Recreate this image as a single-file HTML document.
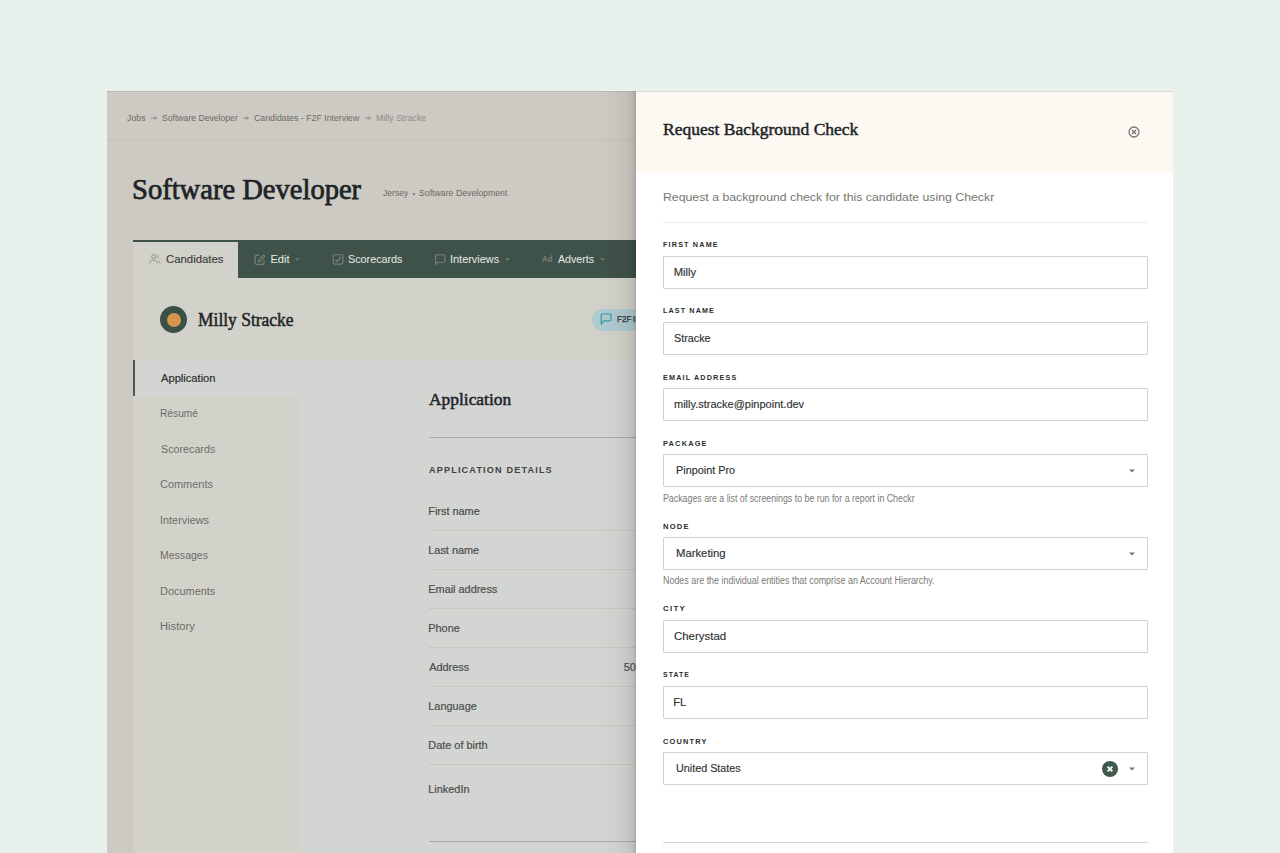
<!DOCTYPE html>
<html><head><meta charset="utf-8"><title>Request Background Check</title>
<style>
html,body{margin:0;padding:0;}
body{width:1280px;height:853px;overflow:hidden;background:#E8F1EB;position:relative;font-family:'Liberation Sans', sans-serif;}
body>div,body>svg{position:absolute;}
</style></head><body>
<div style="left:107px;top:91px;width:529px;height:762px;background:#CDCAC3;"></div>
<div style="left:107px;top:91px;width:529px;height:1px;background:#BEBBB4;"></div>
<div style="left:107px;top:140px;width:529px;height:1px;background:#C4C0B4;"></div>
<div style="left:127.16px;top:113.00px;font-family:'Liberation Sans', sans-serif;font-size:9.67px;line-height:9.67px;color:#6A6A65;white-space:nowrap;transform:scaleX(0.9090);transform-origin:0 0;">Jobs</div>
<div style="left:161.60px;top:113.00px;font-family:'Liberation Sans', sans-serif;font-size:9.67px;line-height:9.67px;color:#6A6A65;white-space:nowrap;transform:scaleX(0.8935);transform-origin:0 0;">Software Developer</div>
<div style="left:253.85px;top:113.00px;font-family:'Liberation Sans', sans-serif;font-size:9.67px;line-height:9.67px;color:#6A6A65;white-space:nowrap;transform:scaleX(0.9086);transform-origin:0 0;">Candidates - F2F Interview</div>
<div style="left:375.57px;top:113.00px;font-family:'Liberation Sans', sans-serif;font-size:9.67px;line-height:9.67px;color:#8C8B85;white-space:nowrap;transform:scaleX(0.9186);transform-origin:0 0;">Milly Stracke</div>
<svg style="left:150.6px;top:114.8px" width="6" height="6" viewBox="0 0 6 6"><path d="M0 3H5.4M3.4 1.1L5.4 3L3.4 4.9" fill="none" stroke="#74736E" stroke-width="0.75"/></svg>
<svg style="left:242.5px;top:114.8px" width="6" height="6" viewBox="0 0 6 6"><path d="M0 3H5.4M3.4 1.1L5.4 3L3.4 4.9" fill="none" stroke="#74736E" stroke-width="0.75"/></svg>
<svg style="left:364.6px;top:114.8px" width="6" height="6" viewBox="0 0 6 6"><path d="M0 3H5.4M3.4 1.1L5.4 3L3.4 4.9" fill="none" stroke="#74736E" stroke-width="0.75"/></svg>
<div style="left:132.39px;top:174.00px;font-family:'Liberation Serif', serif;font-size:29.77px;line-height:29.77px;color:#1D2427;white-space:nowrap;transform:scaleX(0.9593);transform-origin:0 0;-webkit-text-stroke:0.75px #1D2427">Software Developer</div>
<div style="left:383.16px;top:188.00px;font-family:'Liberation Sans', sans-serif;font-size:9.45px;line-height:9.45px;color:#6A6A65;white-space:nowrap;transform:scaleX(0.9077);transform-origin:0 0;">Jersey</div>
<div style="left:412.5px;top:192.6px;width:2.6px;height:2.6px;border-radius:50%;background:#6A6A65"></div>
<div style="left:419.30px;top:188.00px;font-family:'Liberation Sans', sans-serif;font-size:9.45px;line-height:9.45px;color:#6A6A65;white-space:nowrap;transform:scaleX(0.9256);transform-origin:0 0;">Software Development</div>
<div style="left:133px;top:240px;width:503px;height:38px;background:#3F5249;"></div>
<div style="left:133px;top:242px;width:105px;height:36px;background:#D3D2CA;"></div>
<div style="left:133px;top:278px;width:503px;height:82px;background:#D3D2CA;"></div>
<div style="left:133px;top:360px;width:168px;height:493px;background:#D3D2CA;"></div>
<div style="left:301px;top:360px;width:335px;height:493px;background:#D3D5D3;"></div>
<div style="left:133px;top:360px;width:168px;height:36px;background:#D3D5D3;"></div>
<div style="left:133px;top:360px;width:2px;height:36px;background:#4A5B52;"></div>
<div style="left:165.72px;top:253.00px;font-family:'Liberation Sans', sans-serif;font-size:11.63px;line-height:11.63px;color:#383C3A;white-space:nowrap;transform:scaleX(0.9773);transform-origin:0 0;-webkit-text-stroke:0.15px #383C3A">Candidates</div>
<svg style="left:149px;top:254px" width="12" height="10" viewBox="0 0 12 10"><circle cx="4.6" cy="2.6" r="2" fill="none" stroke="#8A8B86" stroke-width="0.9"/><path d="M7.6 0.7A2 2 0 0 1 7.6 4.5" fill="none" stroke="#8A8B86" stroke-width="0.9"/><path d="M0.7 9.4C0.9 7 2.4 6.1 4.6 6.1C6.8 6.1 8.3 7 8.5 9.4" fill="none" stroke="#8A8B86" stroke-width="0.9"/><path d="M9.6 6.6C10.5 7.2 10.9 8.1 11 9.4" fill="none" stroke="#8A8B86" stroke-width="0.9"/></svg>
<div style="left:270.50px;top:254.00px;font-family:'Liberation Sans', sans-serif;font-size:11.05px;line-height:11.05px;color:#E4E8E3;white-space:nowrap;-webkit-text-stroke:0.05px #E4E8E3">Edit</div>
<svg style="left:254px;top:254px" width="12" height="12" viewBox="0 0 12 12"><path d="M4.6 1.3H2.5Q1.1 1.3 1.1 2.7V8.9Q1.1 10.3 2.5 10.3H8.6Q10 10.3 10 8.9V6.6" fill="none" stroke="#787D77" stroke-width="1.2" stroke-linecap="round"/><path d="M4.4 7.8L4.8 5.8L8.7 1.6Q9.5 0.8 10.3 1.6Q11 2.4 10.2 3.2L6.3 7.3Z" fill="none" stroke="#787D77" stroke-width="1.1" stroke-linejoin="round"/></svg>
<svg style="left:295px;top:257.5px" width="5" height="3" viewBox="0 0 5 3"><path d="M0 0H5L2.5 3Z" fill="#63766B"/></svg>
<div style="left:348.30px;top:254.00px;font-family:'Liberation Sans', sans-serif;font-size:11.05px;line-height:11.05px;color:#E4E8E3;white-space:nowrap;transform:scaleX(0.9751);transform-origin:0 0;-webkit-text-stroke:0.05px #E4E8E3">Scorecards</div>
<svg style="left:332px;top:254px" width="12" height="12" viewBox="0 0 12 12"><rect x="1.25" y="0.75" width="9.7" height="9.3" rx="1.7" fill="none" stroke="#787D77" stroke-width="1.2"/><path d="M3.5 5.9L4.8 7.5L8.6 3.5" fill="none" stroke="#787D77" stroke-width="1.2" stroke-linecap="round" stroke-linejoin="round"/></svg>
<div style="left:450.19px;top:254.00px;font-family:'Liberation Sans', sans-serif;font-size:11.05px;line-height:11.05px;color:#E4E8E3;white-space:nowrap;transform:scaleX(0.9895);transform-origin:0 0;-webkit-text-stroke:0.05px #E4E8E3">Interviews</div>
<svg style="left:434px;top:254px" width="12" height="12" viewBox="0 0 12 12"><path d="M1.5 10.4V2.2Q1.5 0.75 2.9 0.75H9.6Q11 0.75 11 2.2V6.8Q11 8.25 9.6 8.25H3.6Z" fill="none" stroke="#787D77" stroke-width="1.2" stroke-linejoin="round"/></svg>
<svg style="left:504.5px;top:257.5px" width="5" height="3" viewBox="0 0 5 3"><path d="M0 0H5L2.5 3Z" fill="#63766B"/></svg>
<div style="left:542.20px;top:255.00px;font-family:'Liberation Sans', sans-serif;font-size:9.01px;line-height:9.01px;color:#76827B;white-space:nowrap;font-weight:bold;transform:scaleX(0.8935);transform-origin:0 0;">Ad</div>
<div style="left:558.38px;top:254.00px;font-family:'Liberation Sans', sans-serif;font-size:11.05px;line-height:11.05px;color:#E4E8E3;white-space:nowrap;transform:scaleX(0.9641);transform-origin:0 0;-webkit-text-stroke:0.05px #E4E8E3">Adverts</div>
<svg style="left:600px;top:257.5px" width="5" height="3" viewBox="0 0 5 3"><path d="M0 0H5L2.5 3Z" fill="#63766B"/></svg>
<div style="left:160px;top:306px;width:27px;height:27px;border-radius:50%;background:#3D5047"></div>
<div style="left:166.5px;top:312.5px;width:14px;height:14px;border-radius:50%;background:#D4944A"></div>
<div style="left:197.89px;top:311.00px;font-family:'Liberation Serif', serif;font-size:18.09px;line-height:18.09px;color:#1D2427;white-space:nowrap;transform:scaleX(0.9660);transform-origin:0 0;-webkit-text-stroke:0.5px #1D2427">Milly Stracke</div>
<div style="left:592px;top:308.5px;width:80px;height:22px;border-radius:11px;background:#AFCAD0"></div>
<svg style="left:599.5px;top:313px" width="12" height="12" viewBox="0 0 12 12"><path d="M1.3 11V2Q1.3 1 2.3 1H10Q11 1 11 2V6.8Q11 7.8 10 7.8H3.8Z" fill="none" stroke="#3A97A6" stroke-width="1.2" stroke-linejoin="round"/></svg>
<div style="left:616.64px;top:315.00px;font-family:'Liberation Sans', sans-serif;font-size:8.36px;line-height:8.36px;color:#2B3432;white-space:nowrap;transform:scaleX(0.9682);transform-origin:0 0;-webkit-text-stroke:0.25px #2B3432">F2F</div>
<div style="left:632.83px;top:315.00px;font-family:'Liberation Sans', sans-serif;font-size:8.36px;line-height:8.36px;color:#2B3432;white-space:nowrap;-webkit-text-stroke:0.25px #2B3432">Interview</div>
<div style="left:160.98px;top:373.00px;font-family:'Liberation Sans', sans-serif;font-size:11.34px;line-height:11.34px;color:#2C302E;white-space:nowrap;transform:scaleX(0.9835);transform-origin:0 0;-webkit-text-stroke:0.2px #2C302E">Application</div>
<div style="left:160.16px;top:408.00px;font-family:'Liberation Sans', sans-serif;font-size:11.05px;line-height:11.05px;color:#6C6D69;white-space:nowrap;transform:scaleX(0.9234);transform-origin:0 0;">Résumé</div>
<div style="left:160.51px;top:444.00px;font-family:'Liberation Sans', sans-serif;font-size:11.05px;line-height:11.05px;color:#6C6D69;white-space:nowrap;transform:scaleX(0.9715);transform-origin:0 0;">Scorecards</div>
<div style="left:160.44px;top:479.00px;font-family:'Liberation Sans', sans-serif;font-size:11.05px;line-height:11.05px;color:#6C6D69;white-space:nowrap;transform:scaleX(0.9914);transform-origin:0 0;">Comments</div>
<div style="left:160.00px;top:515.00px;font-family:'Liberation Sans', sans-serif;font-size:11.05px;line-height:11.05px;color:#6C6D69;white-space:nowrap;transform:scaleX(0.9854);transform-origin:0 0;">Interviews</div>
<div style="left:160.14px;top:550.00px;font-family:'Liberation Sans', sans-serif;font-size:11.05px;line-height:11.05px;color:#6C6D69;white-space:nowrap;transform:scaleX(0.9522);transform-origin:0 0;">Messages</div>
<div style="left:160.10px;top:586.00px;font-family:'Liberation Sans', sans-serif;font-size:11.05px;line-height:11.05px;color:#6C6D69;white-space:nowrap;transform:scaleX(0.9896);transform-origin:0 0;">Documents</div>
<div style="left:160.08px;top:621.00px;font-family:'Liberation Sans', sans-serif;font-size:11.05px;line-height:11.05px;color:#6C6D69;white-space:nowrap;transform:scaleX(1.0108);transform-origin:0 0;">History</div>
<div style="left:429.03px;top:392.00px;font-family:'Liberation Serif', serif;font-size:16.79px;line-height:16.79px;color:#1D2427;white-space:nowrap;transform:scaleX(1.0372);transform-origin:0 0;-webkit-text-stroke:0.5px #1D2427">Application</div>
<div style="left:429px;top:437px;width:207px;height:1px;background:#A8AAA8;"></div>
<div style="left:428.97px;top:465.00px;font-family:'Liberation Sans', sans-serif;font-size:9.45px;line-height:9.45px;color:#3E4240;white-space:nowrap;font-weight:bold;letter-spacing:1.2px;transform:scaleX(0.9647);transform-origin:0 0;">APPLICATION DETAILS</div>
<div style="left:428.31px;top:506.00px;font-family:'Liberation Sans', sans-serif;font-size:10.90px;line-height:10.90px;color:#4B4D4B;white-space:nowrap;-webkit-text-stroke:0.2px #4B4D4B">First name</div>
<div style="left:429px;top:530px;width:207px;height:1px;background:#CCC6BA;"></div>
<div style="left:428.31px;top:545.00px;font-family:'Liberation Sans', sans-serif;font-size:10.90px;line-height:10.90px;color:#4B4D4B;white-space:nowrap;-webkit-text-stroke:0.2px #4B4D4B">Last name</div>
<div style="left:429px;top:569px;width:207px;height:1px;background:#CCC6BA;"></div>
<div style="left:428.31px;top:584.00px;font-family:'Liberation Sans', sans-serif;font-size:10.90px;line-height:10.90px;color:#4B4D4B;white-space:nowrap;-webkit-text-stroke:0.2px #4B4D4B">Email address</div>
<div style="left:429px;top:608px;width:207px;height:1px;background:#CCC6BA;"></div>
<div style="left:428.31px;top:623.00px;font-family:'Liberation Sans', sans-serif;font-size:10.90px;line-height:10.90px;color:#4B4D4B;white-space:nowrap;-webkit-text-stroke:0.2px #4B4D4B">Phone</div>
<div style="left:429px;top:647px;width:207px;height:1px;background:#CCC6BA;"></div>
<div style="left:429.18px;top:662.00px;font-family:'Liberation Sans', sans-serif;font-size:10.90px;line-height:10.90px;color:#4B4D4B;white-space:nowrap;-webkit-text-stroke:0.2px #4B4D4B">Address</div>
<div style="left:429px;top:686px;width:207px;height:1px;background:#CCC6BA;"></div>
<div style="left:428.31px;top:701.00px;font-family:'Liberation Sans', sans-serif;font-size:10.90px;line-height:10.90px;color:#4B4D4B;white-space:nowrap;-webkit-text-stroke:0.2px #4B4D4B">Language</div>
<div style="left:429px;top:725px;width:207px;height:1px;background:#CCC6BA;"></div>
<div style="left:428.31px;top:740.00px;font-family:'Liberation Sans', sans-serif;font-size:10.90px;line-height:10.90px;color:#4B4D4B;white-space:nowrap;-webkit-text-stroke:0.2px #4B4D4B">Date of birth</div>
<div style="left:429px;top:764px;width:207px;height:1px;background:#CCC6BA;"></div>
<div style="left:428.31px;top:784.00px;font-family:'Liberation Sans', sans-serif;font-size:10.90px;line-height:10.90px;color:#4B4D4B;white-space:nowrap;-webkit-text-stroke:0.2px #4B4D4B">LinkedIn</div>
<div style="left:623.66px;top:662.00px;font-family:'Liberation Sans', sans-serif;font-size:10.90px;line-height:10.90px;color:#4B4D4B;white-space:nowrap;-webkit-text-stroke:0.2px #4B4D4B">50</div>
<div style="left:429px;top:841px;width:207px;height:1px;background:#A8AAA8;"></div>
<div style="left:596px;top:91px;width:40px;height:762px;background:linear-gradient(to right, rgba(0,0,0,0) 0%, rgba(0,0,0,0.01) 30%, rgba(0,0,0,0.03) 60%, rgba(0,0,0,0.065) 82%, rgba(0,0,0,0.11) 92%, rgba(0,0,0,0.19) 100%)"></div>
<div style="left:636px;top:91px;width:537px;height:762px;background:#FFFFFF;"></div>
<div style="left:636px;top:91px;width:537px;height:82px;background:#FCF9F2;"></div>
<div style="left:636px;top:91px;width:537px;height:1px;background:#DCDAD3;"></div>
<div style="left:663.29px;top:122.00px;font-family:'Liberation Serif', serif;font-size:16.34px;line-height:16.34px;color:#1D2427;white-space:nowrap;transform:scaleX(1.0715);transform-origin:0 0;-webkit-text-stroke:0.45px #1D2427">Request Background Check</div>
<svg style="left:1128px;top:126.3px" width="12" height="12" viewBox="0 0 12 12"><circle cx="6" cy="6" r="5" fill="none" stroke="#777" stroke-width="1.3"/><path d="M3.9 3.9L8.1 8.1M8.1 3.9L3.9 8.1" stroke="#777" stroke-width="1.4"/></svg>
<div style="left:662.59px;top:192.00px;font-family:'Liberation Sans', sans-serif;font-size:11.05px;line-height:11.05px;color:#77766F;white-space:nowrap;transform:scaleX(1.1122);transform-origin:0 0;">Request a background check for this candidate using Checkr</div>
<div style="left:663px;top:222px;width:485px;height:1px;background:#F0EADF;"></div>
<div style="left:662.92px;top:241.00px;font-family:'Liberation Sans', sans-serif;font-size:7.99px;line-height:7.99px;color:#2A2E2D;white-space:nowrap;font-weight:bold;letter-spacing:1.3px;transform:scaleX(0.9028);transform-origin:0 0;">FIRST NAME</div>
<div style="left:663px;top:256px;width:485px;height:33px;background:#fff;border:1px solid #D4D2CC;box-sizing:border-box;border-radius:1px"></div>
<div style="left:673.68px;top:267.00px;font-family:'Liberation Sans', sans-serif;font-size:11.19px;line-height:11.19px;color:#2E3230;white-space:nowrap;-webkit-text-stroke:0.15px #2E3230">Milly</div>
<div style="left:662.92px;top:307.00px;font-family:'Liberation Sans', sans-serif;font-size:7.99px;line-height:7.99px;color:#2A2E2D;white-space:nowrap;font-weight:bold;letter-spacing:1.3px;transform:scaleX(0.8917);transform-origin:0 0;">LAST NAME</div>
<div style="left:663px;top:322px;width:485px;height:33px;background:#fff;border:1px solid #D4D2CC;box-sizing:border-box;border-radius:1px"></div>
<div style="left:673.70px;top:333.00px;font-family:'Liberation Sans', sans-serif;font-size:11.19px;line-height:11.19px;color:#2E3230;white-space:nowrap;transform:scaleX(0.9639);transform-origin:0 0;-webkit-text-stroke:0.15px #2E3230">Stracke</div>
<div style="left:662.92px;top:374.00px;font-family:'Liberation Sans', sans-serif;font-size:7.99px;line-height:7.99px;color:#2A2E2D;white-space:nowrap;font-weight:bold;letter-spacing:1.3px;transform:scaleX(0.9007);transform-origin:0 0;">EMAIL ADDRESS</div>
<div style="left:663px;top:388px;width:485px;height:33px;background:#fff;border:1px solid #D4D2CC;box-sizing:border-box;border-radius:1px"></div>
<div style="left:673.67px;top:399.00px;font-family:'Liberation Sans', sans-serif;font-size:11.19px;line-height:11.19px;color:#2E3230;white-space:nowrap;transform:scaleX(0.9827);transform-origin:0 0;-webkit-text-stroke:0.15px #2E3230">milly.stracke@pinpoint.dev</div>
<div style="left:662.91px;top:440.00px;font-family:'Liberation Sans', sans-serif;font-size:7.99px;line-height:7.99px;color:#2A2E2D;white-space:nowrap;font-weight:bold;letter-spacing:1.3px;transform:scaleX(0.9238);transform-origin:0 0;">PACKAGE</div>
<div style="left:663px;top:454px;width:485px;height:33px;background:#fff;border:1px solid #D4D2CC;box-sizing:border-box;border-radius:1px"></div>
<div style="left:675.91px;top:465.00px;font-family:'Liberation Sans', sans-serif;font-size:11.19px;line-height:11.19px;color:#2E3230;white-space:nowrap;transform:scaleX(0.9700);transform-origin:0 0;-webkit-text-stroke:0.15px #2E3230">Pinpoint Pro</div>
<svg style="left:1128.5px;top:468.5px" width="6" height="4" viewBox="0 0 6 4"><path d="M0 0.5H6L3 3.5Z" fill="#777"/></svg>
<div style="left:662.68px;top:493.00px;font-family:'Liberation Sans', sans-serif;font-size:10.61px;line-height:10.61px;color:#7A7975;white-space:nowrap;transform:scaleX(0.8302);transform-origin:0 0;">Packages are a list of screenings to be run for a report in Checkr</div>
<div style="left:662.89px;top:523.00px;font-family:'Liberation Sans', sans-serif;font-size:7.99px;line-height:7.99px;color:#2A2E2D;white-space:nowrap;font-weight:bold;letter-spacing:1.3px;transform:scaleX(0.9485);transform-origin:0 0;">NODE</div>
<div style="left:663px;top:537px;width:485px;height:33px;background:#fff;border:1px solid #D4D2CC;box-sizing:border-box;border-radius:1px"></div>
<div style="left:675.87px;top:548.00px;font-family:'Liberation Sans', sans-serif;font-size:11.19px;line-height:11.19px;color:#2E3230;white-space:nowrap;transform:scaleX(1.0103);transform-origin:0 0;-webkit-text-stroke:0.15px #2E3230">Marketing</div>
<svg style="left:1128.5px;top:551.5px" width="6" height="4" viewBox="0 0 6 4"><path d="M0 0.5H6L3 3.5Z" fill="#777"/></svg>
<div style="left:662.67px;top:575.00px;font-family:'Liberation Sans', sans-serif;font-size:10.61px;line-height:10.61px;color:#7A7975;white-space:nowrap;transform:scaleX(0.8407);transform-origin:0 0;">Nodes are the individual entities that comprise an Account Hierarchy.</div>
<div style="left:663.08px;top:605.00px;font-family:'Liberation Sans', sans-serif;font-size:7.99px;line-height:7.99px;color:#2A2E2D;white-space:nowrap;font-weight:bold;letter-spacing:1.3px;transform:scaleX(0.9836);transform-origin:0 0;">CITY</div>
<div style="left:663px;top:620px;width:485px;height:33px;background:#fff;border:1px solid #D4D2CC;box-sizing:border-box;border-radius:1px"></div>
<div style="left:673.62px;top:631.00px;font-family:'Liberation Sans', sans-serif;font-size:11.19px;line-height:11.19px;color:#2E3230;white-space:nowrap;transform:scaleX(1.0218);transform-origin:0 0;-webkit-text-stroke:0.15px #2E3230">Cherystad</div>
<div style="left:663.20px;top:671.00px;font-family:'Liberation Sans', sans-serif;font-size:7.99px;line-height:7.99px;color:#2A2E2D;white-space:nowrap;font-weight:bold;letter-spacing:1.3px;transform:scaleX(0.8594);transform-origin:0 0;">STATE</div>
<div style="left:663px;top:686px;width:485px;height:33px;background:#fff;border:1px solid #D4D2CC;box-sizing:border-box;border-radius:1px"></div>
<div style="left:673.28px;top:697.00px;font-family:'Liberation Sans', sans-serif;font-size:11.19px;line-height:11.19px;color:#2E3230;white-space:nowrap;-webkit-text-stroke:0.15px #2E3230">FL</div>
<div style="left:663.10px;top:738.00px;font-family:'Liberation Sans', sans-serif;font-size:7.99px;line-height:7.99px;color:#2A2E2D;white-space:nowrap;font-weight:bold;letter-spacing:1.3px;transform:scaleX(0.9255);transform-origin:0 0;">COUNTRY</div>
<div style="left:663px;top:752px;width:485px;height:33px;background:#fff;border:1px solid #D4D2CC;box-sizing:border-box;border-radius:1px"></div>
<div style="left:676.17px;top:763.00px;font-family:'Liberation Sans', sans-serif;font-size:11.19px;line-height:11.19px;color:#2E3230;white-space:nowrap;transform:scaleX(0.9633);transform-origin:0 0;-webkit-text-stroke:0.15px #2E3230">United States</div>
<svg style="left:1128.5px;top:766.5px" width="6" height="4" viewBox="0 0 6 4"><path d="M0 0.5H6L3 3.5Z" fill="#777"/></svg>
<svg style="left:1102px;top:760.5px" width="16" height="16" viewBox="0 0 16 16"><circle cx="8" cy="8" r="8" fill="#3F5A4D"/><path d="M5.6 5.6L10.4 10.4M10.4 5.6L5.6 10.4" stroke="#fff" stroke-width="1.8"/></svg>
<div style="left:663px;top:842px;width:485px;height:1px;background:#D8D6D1;"></div>
</body></html>
